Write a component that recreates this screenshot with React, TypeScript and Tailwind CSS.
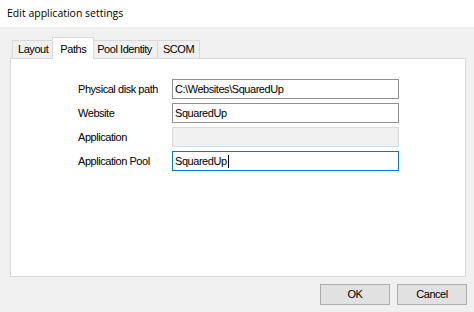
import { useState } from "react";

const TABS = ["Layout", "Paths", "Pool Identity", "SCOM"];

type Field = {
  label: string;
  value: string;
  disabled?: boolean;
  focused?: boolean;
};

const FIELDS: Field[] = [
  { label: "Physical disk path", value: "C:\\Websites\\SquaredUp" },
  { label: "Website", value: "SquaredUp" },
  { label: "Application", value: "", disabled: true },
  { label: "Application Pool", value: "SquaredUp", focused: true },
];

function TextField({ field }: { field: Field }) {
  const border = field.disabled
    ? "border-[#dadada] bg-[#f0f0f0]"
    : field.focused
      ? "border-[#0078d7] bg-white"
      : "border-[#8f8f8f] bg-white";

  return (
    <div className={`flex h-[20px] w-[227px] items-center border px-[2px] ${border}`}>
      <span className="leading-none">{field.value}</span>
      {field.focused && <span className="ml-[1px] h-[13px] w-px bg-black" />}
    </div>
  );
}

export default function App() {
  const [active, setActive] = useState(1);

  return (
    <div
      className="flex h-[312px] w-[474px] flex-col bg-[#f0f0f0] text-[11px] tracking-[-0.45px] text-black"
      style={{ fontFamily: '"Liberation Sans", Arial, sans-serif' }}
    >
      <div
        className="flex h-[27px] items-center bg-white px-[7px] text-[10.5px] tracking-normal"
        style={{ fontFamily: '"Open Sans", "Noto Sans", sans-serif' }}
      >
        Edit application settings
      </div>

      <div className="flex flex-1 flex-col pl-[10px] pr-[8px] pt-[10px]">
        <div className="flex h-[21px] items-end pl-[2px]">
          {TABS.map((tab, i) =>
            i === active ? (
              <button
                key={tab}
                type="button"
                onClick={() => setActive(i)}
                className="relative z-10 -mx-[2px] -mb-px flex h-[22px] items-start border border-b-0 border-[#d9d9d9] bg-white px-[7px] pt-[3px]"
              >
                {tab}
              </button>
            ) : (
              <button
                key={tab}
                type="button"
                onClick={() => setActive(i)}
                className="-ml-px flex h-[18px] items-center border border-b-0 border-[#d9d9d9] bg-[#f0f0f0] px-[5px] first:ml-0"
              >
                {tab}
              </button>
            )
          )}
        </div>

        <div className="flex h-[219px] flex-col gap-[4px] border border-[#d9d9d9] bg-white pl-[67px] pt-[20px]">
          {FIELDS.map((f) => (
            <div key={f.label} className="flex items-center">
              <span className="w-[94px]">{f.label}</span>
              <TextField field={f} />
            </div>
          ))}
        </div>

        <div className="mt-[7px] flex justify-end gap-[7px]">
          <button
            type="button"
            className="h-[21px] w-[70px] border border-[#adadad] bg-[#e1e1e1]"
          >
            OK
          </button>
          <button
            type="button"
            className="-mr-px h-[21px] w-[70px] border border-[#adadad] bg-[#e1e1e1]"
          >
            Cancel
          </button>
        </div>
      </div>
    </div>
  );
}
